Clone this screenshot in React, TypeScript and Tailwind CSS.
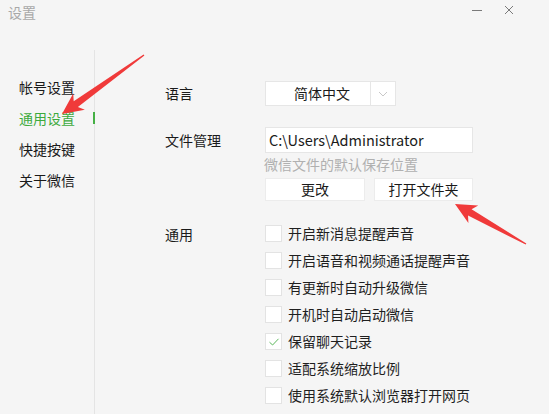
import React from "react";

const font = { fontFamily: '"Noto Sans CJK SC", "Noto Sans", sans-serif' };

function Arrow({ tipX, tipY, tailX, tailY }: { tipX: number; tipY: number; tailX: number; tailY: number }) {
  const dx = tailX - tipX;
  const dy = tailY - tipY;
  const L = Math.sqrt(dx * dx + dy * dy);
  const ang = (Math.atan2(dy, dx) * 180) / Math.PI;
  const pts = `0,0 21,-10 17,-3.6 ${L},-0.7 ${L},0.7 17,3.6 21,10`;
  return <polygon points={pts} fill="#f03a3a" transform={`translate(${tipX} ${tipY}) rotate(${ang})`} />;
}

function Check({ checked, label }: { checked?: boolean; label: string }) {
  return (
    <div className="flex items-center h-[27px]">
      <div className="w-[17px] h-[17px] bg-white border border-[#e3e3e3] flex items-center justify-center">
        {checked && (
          <svg width="12" height="10" viewBox="0 0 12 10">
            <path d="M1.5 5.2 L4.6 8 L10.5 1.8" fill="none" stroke="#5cb85c" strokeWidth="1" />
          </svg>
        )}
      </div>
      <span className="ml-[6px] text-[14px] text-[#1f1f1f]">{label}</span>
    </div>
  );
}

export default function App() {
  return (
    <div className="relative w-[549px] h-[414px] bg-[#f5f5f5] overflow-hidden" style={font}>
      {/* title bar */}
      <div className="h-[50px] flex items-start justify-between">
        <span className="ml-[8px] mt-[3px] text-[14px] leading-[18px] text-[#a8a8a8]">设置</span>
        <div className="flex items-start mr-[34px] mt-[1px] text-[#8a8a8a]">
          <svg width="12" height="14" viewBox="0 0 12 14" className="mt-[2px]">
            <line x1="1" y1="7.5" x2="11" y2="7.5" stroke="#7a7a7a" strokeWidth="1" />
          </svg>
          <svg width="12" height="14" viewBox="0 0 12 14" className="ml-[20px] mt-[2px]">
            <path d="M2 3 L10 11 M10 3 L2 11" stroke="#7a7a7a" strokeWidth="1" />
          </svg>
        </div>
      </div>
      <div className="flex h-[364px]">
        {/* sidebar */}
        <div className="w-[95px] border-r border-[#e4e4e4] pt-[22px] text-[14px]">
          <div className="h-[31px] flex items-center pl-[19px] text-[#1a1a1a]">帐号设置</div>
          <div className="relative h-[31px] flex items-center pl-[19px] text-[#3daa3d]">
            通用设置
            <span className="absolute right-[-1px] top-[9px] w-[2px] h-[12px] bg-[#45b045]" />
          </div>
          <div className="h-[31px] flex items-center pl-[19px] text-[#1a1a1a]">快捷按键</div>
          <div className="h-[31px] flex items-center pl-[19px] text-[#1a1a1a]">关于微信</div>
        </div>
        {/* content */}
        <div className="flex-1 pl-[70px] pt-[31px] text-[14px] text-[#1a1a1a]">
          <div className="flex items-center h-[25px]">
            <div className="w-[100px]">语言</div>
            <div className="flex h-[25px] w-[131px] bg-white border border-[#e6e6e6]">
              <div className="w-[104px] flex items-center justify-center pl-[8px]">简体中文</div>
              <div className="flex-1 border-l border-[#e6e6e6] flex items-center justify-center">
                <svg width="10" height="6" viewBox="0 0 10 6">
                  <path d="M1 1 L5 5 L9 1" fill="none" stroke="#c8c8c8" strokeWidth="1" />
                </svg>
              </div>
            </div>
          </div>
          <div className="flex mt-[21px]">
            <div className="w-[100px] h-[26px] flex items-center">文件管理</div>
            <div className="flex flex-col">
              <div className="w-[208px] h-[26px] bg-white border border-[#e6e6e6] flex items-center pl-[3px] text-[14.5px] text-[#1a1a1a]">
                C:\Users\Administrator
              </div>
              <div className="h-[23px] flex items-center text-[14px] text-[#b0b0b0] -ml-[1px]">微信文件的默认保存位置</div>
              <div className="flex gap-[9px] mt-[2px]">
                <div className="w-[100px] h-[23px] bg-white border border-[#ececec] flex items-center justify-center">更改</div>
                <div className="w-[99px] h-[23px] bg-white border border-[#ececec] flex items-center justify-center">打开文件夹</div>
              </div>
            </div>
          </div>
          <div className="flex mt-[19px]">
            <div className="w-[100px] h-[27px] flex items-center pt-[2px]">通用</div>
            <div className="flex flex-col">
              <Check label="开启新消息提醒声音" />
              <Check label="开启语音和视频通话提醒声音" />
              <Check label="有更新时自动升级微信" />
              <Check label="开机时自动启动微信" />
              <Check checked label="保留聊天记录" />
              <Check label="适配系统缩放比例" />
              <Check label="使用系统默认浏览器打开网页" />
            </div>
          </div>
        </div>
      </div>
      {/* annotation arrows */}
      <svg className="absolute left-0 top-0 pointer-events-none" width="549" height="414">
        <Arrow tipX={62} tipY={114} tailX={144} tailY={55} />
        <Arrow tipX={455} tipY={204} tailX={526} tailY={244} />
      </svg>
    </div>
  );
}
